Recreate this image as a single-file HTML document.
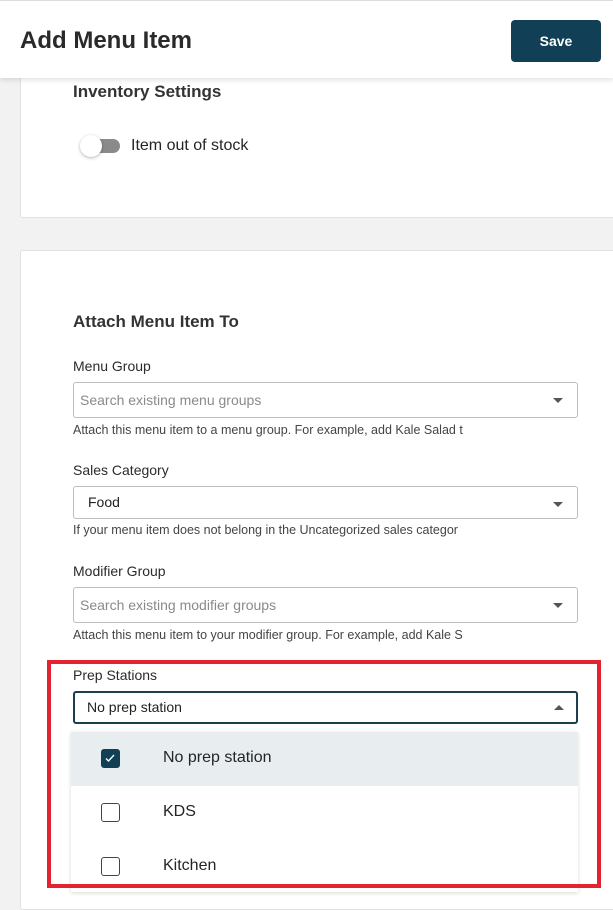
<!DOCTYPE html>
<html><head><style>
*{box-sizing:border-box;margin:0;padding:0}
body{width:613px;height:890px;overflow:hidden;background:#f2f2f2;font-family:"Liberation Sans",sans-serif;color:#252525;position:relative}
.a{position:absolute}
.card{background:#fff;border:1px solid #e2e2e2;border-radius:3px}
.lbl{font-size:14px;color:#2b2b2b}
.box{border:1px solid #bdbdbd;border-radius:3px;background:#fff;height:36px;width:505px;left:73px}
.ph{font-size:14px;color:#8a8a8a;left:6px;top:9px}
.help{font-size:12.5px;color:#444;left:73px;white-space:nowrap;width:392px;overflow:hidden}
.caret{right:14px;top:15px;width:0;height:0;border-left:5px solid transparent;border-right:5px solid transparent;border-top:5px solid #555}
.cb{left:101px;width:19px;height:19px;border:1.5px solid #2f4b58;border-radius:3px}
.opt{font-size:16px;left:163px}
</style></head><body>
<div class="a card" style="left:20px;top:60px;width:620px;height:158px"></div>
<div class="a card" style="left:20px;top:250px;width:620px;height:660px"></div>
<div class="a" style="left:0;top:0;width:613px;height:78px;background:#fff;border-top:1px solid #ddd;box-shadow:0 2px 5px rgba(0,0,0,.12)"></div>
<div class="a" style="left:20px;top:27px;font-size:24px;font-weight:bold;color:#2a2a2a">Add Menu Item</div>
<div class="a" style="left:511px;top:20px;width:90px;height:42px;background:#113f55;border-radius:4px;color:#fff;font-size:14px;font-weight:bold;text-align:center;line-height:42px">Save</div>
<div class="a" style="left:73px;top:82px;font-size:17px;font-weight:bold;color:#333">Inventory Settings</div>
<div class="a" style="left:87px;top:139px;width:33px;height:14px;border-radius:7px;background:#8a8a8a"></div>
<div class="a" style="left:80px;top:135px;width:22px;height:22px;border-radius:50%;background:#fff;box-shadow:0 1px 3px rgba(0,0,0,.3)"></div>
<div class="a" style="left:131px;top:137px;font-size:16px">Item out of stock</div>
<div class="a" style="left:73px;top:312px;font-size:17px;font-weight:bold;color:#333">Attach Menu Item To</div>
<div class="a lbl" style="left:73px;top:358px">Menu Group</div>
<div class="a box" style="top:382px"><div class="a ph">Search existing menu groups</div><div class="a caret"></div></div>
<div class="a help" style="top:423px">Attach this menu item to a menu group. For example, add Kale Salad t</div>
<div class="a lbl" style="left:73px;top:462px">Sales Category</div>
<div class="a box" style="top:486px;height:33px"><div class="a ph" style="color:#222;left:14px;top:7px">Food</div><div class="a caret"></div></div>
<div class="a help" style="top:523px">If your menu item does not belong in the Uncategorized sales categor</div>
<div class="a lbl" style="left:73px;top:563px">Modifier Group</div>
<div class="a box" style="top:587px"><div class="a ph">Search existing modifier groups</div><div class="a caret"></div></div>
<div class="a help" style="top:628px">Attach this menu item to your modifier group. For example, add Kale S</div>
<div class="a lbl" style="left:73px;top:667px">Prep Stations</div>
<div class="a box" style="top:691px;height:33px;border:2px solid #1c3f50"><div class="a ph" style="color:#222;left:12px;top:6px">No prep station</div><div class="a" style="right:12px;top:12px;width:0;height:0;border-left:5px solid transparent;border-right:5px solid transparent;border-bottom:5px solid #555"></div></div>
<div class="a" style="left:71px;top:732px;width:507px;height:160px;background:#fff;box-shadow:0 1px 4px rgba(0,0,0,.15)"></div>
<div class="a" style="left:71px;top:732px;width:507px;height:54px;background:#e8eef0"></div>
<div class="a cb" style="top:749px;background:#113f55;border-color:#113f55"><svg width="16" height="16" viewBox="0 0 16 16" style="position:absolute;left:0;top:0"><path d="M4 8.5l2.5 2.5L12 5" stroke="#fff" stroke-width="1.3" fill="none"/></svg></div>
<div class="a opt" style="top:749px">No prep station</div>
<div class="a cb" style="top:803px"></div>
<div class="a opt" style="top:803px">KDS</div>
<div class="a cb" style="top:857px"></div>
<div class="a opt" style="top:857px">Kitchen</div>
<div class="a" style="left:47px;top:660px;width:554px;height:228px;border:4px solid #e3232f"></div>
</body></html>
